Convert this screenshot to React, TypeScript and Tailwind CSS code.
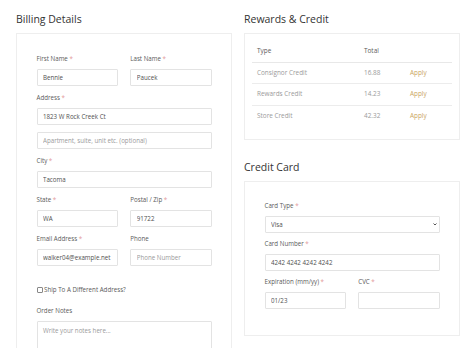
import React from 'react';

const font = { fontFamily: '"Open Sans", "Liberation Sans", sans-serif' };

const Label: React.FC<{ text: string; required?: boolean }> = ({ text, required }) => (
  <label className="block text-[6.2px] leading-[10px] text-[#5a5a5a] mb-[5px]">
    {text}
    {required && <span className="text-[#e39a9a]"> *</span>}
  </label>
);

const Input: React.FC<{ value?: string; placeholder?: string }> = ({ value, placeholder }) => (
  <input
    readOnly
    defaultValue={value}
    placeholder={placeholder}
    className="block w-full h-[17px] border border-[#e3e3e3] rounded-[1px] pl-[5.5px] pr-[1px] text-[6.2px] text-[#505050] placeholder:text-[#9a9a9a] outline-none bg-white"
  />
);

const Field: React.FC<{ label?: string; required?: boolean; value?: string; placeholder?: string }> = ({
  label,
  required,
  value,
  placeholder,
}) => (
  <div className="mb-[7px]">
    {label && <Label text={label} required={required} />}
    <Input value={value} placeholder={placeholder} />
  </div>
);

const credits = [
  { type: 'Consignor Credit', total: '16.88' },
  { type: 'Rewards Credit', total: '14.23' },
  { type: 'Store Credit', total: '42.32' },
];

export default function App() {
  return (
    <div className="bg-white w-[474px] h-[348px] overflow-hidden pl-[16px] pt-[12px]" style={font}>
      <div className="flex gap-[12px]">
        {/* left column */}
        <div className="w-[216px] shrink-0">
          <h2 className="text-[10.5px] leading-[14px] font-medium text-[#333] mb-[7px]">Billing Details</h2>
          <div className="border border-[#eeeeee] px-[19.5px] pt-[20px] pb-[20px]">
            <div className="grid grid-cols-2 gap-x-[12.5px]">
              <Field label="First Name" required value="Bennie" />
              <Field label="Last Name" required value="Paucek" />
            </div>
            <Field label="Address" required value="1823 W Rock Creek Ct" />
            <Field placeholder="Apartment, suite, unit etc. (optional)" />
            <Field label="City" required value="Tacoma" />
            <div className="grid grid-cols-2 gap-x-[12.5px]">
              <Field label="State" required value="WA" />
              <Field label="Postal / Zip" required value="91722" />
            </div>
            <div className="grid grid-cols-2 gap-x-[12.5px]">
              <Field label="Email Address" required value="walker04@example.net" />
              <Field label="Phone" placeholder="Phone Number" />
            </div>
            <div className="flex items-center h-[10px] mt-[12px] mb-[11px] text-[6.2px] text-[#5a5a5a]">
              <span className="inline-block w-[6px] h-[6px] border border-[#888] rounded-[1px] mr-[1.5px]" />
              Ship To A Different Address?
            </div>
            <Label text="Order Notes" />
            <textarea
              readOnly
              placeholder="Write your notes here..."
              className="block w-full h-[50px] border border-[#e3e3e3] rounded-[1px] px-[5.5px] py-[4px] text-[6.2px] text-[#505050] placeholder:text-[#9a9a9a] outline-none resize-none"
            />
          </div>
        </div>

        {/* right column */}
        <div className="w-[216px] shrink-0">
          <h2 className="text-[10.5px] leading-[14px] font-medium text-[#333] mb-[7px]">Rewards &amp; Credit</h2>
          <div className="border border-[#eeeeee] px-[7px] pt-[6px] pb-[12px]">
            <table className="w-full border-collapse text-[6.4px]">
              <thead>
                <tr className="h-[22px] border-b border-[#e8e8e8] text-[#5a5a5a] text-left">
                  <th className="font-normal pl-[5px] w-[107px]">Type</th>
                  <th className="font-normal pl-[5px] w-[46px]">Total</th>
                  <th />
                </tr>
              </thead>
              <tbody>
                {credits.map((c, i) => (
                  <tr
                    key={c.type}
                    className={'h-[21.5px] text-[#9a9a9a] ' + (i < credits.length - 1 ? 'border-b border-[#ececec]' : '')}
                  >
                    <td className="pl-[5px]">{c.type}</td>
                    <td className="pl-[5px]">{c.total}</td>
                    <td className="pl-[5px] text-[#c9a55e]">Apply</td>
                  </tr>
                ))}
              </tbody>
            </table>
          </div>

          <h2 className="text-[10.5px] leading-[14px] font-medium text-[#333] mt-[20px] mb-[7px]">Credit Card</h2>
          <div className="border border-[#eeeeee] px-[19.5px] pt-[19.5px] pb-[20px]">
            <div className="mb-[6px]">
              <Label text="Card Type" required />
              <div className="relative">
                <select className="block w-full h-[17px] border border-[#e3e3e3] rounded-[1px] px-[5.5px] text-[6.2px] text-[#505050] appearance-none bg-white outline-none">
                  <option>Visa</option>
                </select>
                <svg
                  className="absolute right-[3px] top-[7px] w-[4px] h-[3px] pointer-events-none"
                  viewBox="0 0 8 6"
                  fill="none"
                  stroke="#555"
                  strokeWidth="2"
                >
                  <path d="M1 1l3 3 3-3" />
                </svg>
              </div>
            </div>
            <div className="mb-[6px]">
              <Label text="Card Number" required />
              <Input value="4242 4242 4242 4242" />
            </div>
            <div className="grid grid-cols-2 gap-x-[12.5px]">
              <div className="mb-[6px]">
                <Label text="Expiration (mm/yy)" required />
                <Input value="01/23" />
              </div>
              <div className="mb-[6px]">
                <Label text="CVC" required />
                <Input />
              </div>
            </div>
          </div>
        </div>
      </div>
    </div>
  );
}
